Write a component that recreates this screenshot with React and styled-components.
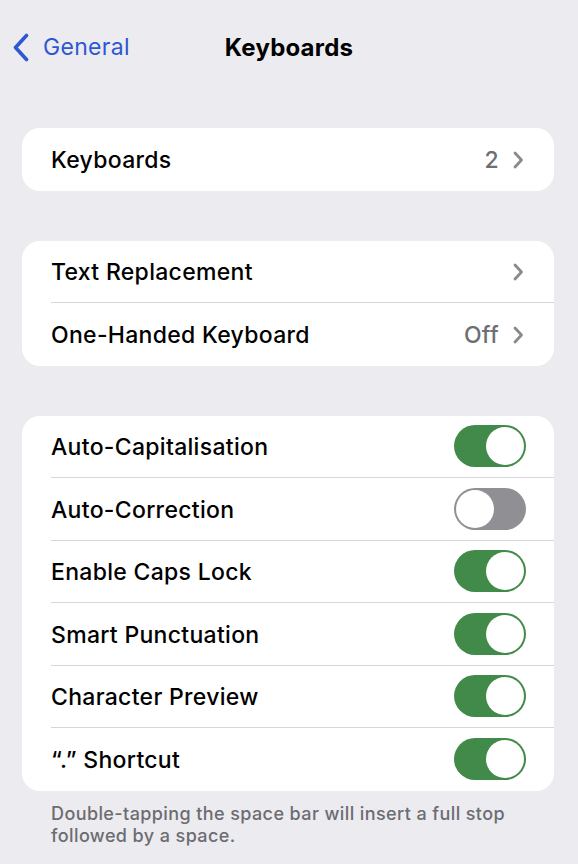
import React from "react";
import styled, { createGlobalStyle } from "styled-components";

const Global = createGlobalStyle`
  html, body { margin: 0; padding: 0; background: #ebebf0; }
  body { font-family: Inter, "Noto Sans", sans-serif; -webkit-font-smoothing: antialiased; }
`;

const Page = styled.div`
  width: 578px;
  min-height: 864px;
  background: #ebebf0;
  display: flex;
  flex-direction: column;
`;

const NavBar = styled.div`
  height: 94px;
  display: grid;
  grid-template-columns: 1fr auto 1fr;
  align-items: center;
  padding: 0 12px;
  box-sizing: border-box;
`;

const Back = styled.div`
  display: flex;
  align-items: center;
  gap: 14px;
  color: #2f57d1;
  font-size: 23px;
  font-weight: 400;
  letter-spacing: 0.3px;
`;

const Title = styled.div`
  font-size: 24px;
  font-weight: 700;
  color: #000;
  letter-spacing: 0.2px;
`;

const Content = styled.div`
  display: flex;
  flex-direction: column;
  padding: 34px 24px 0 22px;
  gap: 50px;
`;

const Card = styled.div`
  background: #fff;
  border-radius: 18px;
  overflow: hidden;
`;

const Row = styled.div`
  height: 62.5px;
  display: flex;
  align-items: center;
  padding-left: 29px;
`;

const RowInner = styled.div`
  flex: 1;
  height: 100%;
  display: flex;
  align-items: center;
  justify-content: space-between;
  padding-right: 28px;
  box-sizing: border-box;
  border-bottom: ${(p) => (p.$last ? "none" : "1px solid #d6d6da")};
`;

const Label = styled.span`
  font-size: 23px;
  font-weight: 500;
  color: #000;
  letter-spacing: 0.3px;
  padding-top: 2px;
`;

const Detail = styled.span`
  display: flex;
  align-items: center;
  gap: 14px;
  font-size: 23px;
  color: #6e6e73;
  font-weight: 500;
  letter-spacing: 0.3px;
  padding-right: 2px;
  padding-top: 2px;
`;

const Track = styled.div`
  width: 72px;
  height: 42px;
  border-radius: 21px;
  background: ${(p) => (p.$on ? "#428a49" : "#8f8f94")};
  display: flex;
  align-items: center;
  justify-content: ${(p) => (p.$on ? "flex-end" : "flex-start")};
  padding: 0 2px;
  box-sizing: border-box;
`;

const Knob = styled.div`
  width: 38px;
  height: 38px;
  border-radius: 50%;
  background: #fff;
`;

const Footer = styled.div`
  margin-top: -38px;
  padding: 0 10px 0 29px;
  font-size: 18px;
  line-height: 22.5px;
  color: #6c6c71;
  font-weight: 500;
  letter-spacing: 0.4px;
`;

const Chevron = () => (
  <svg width="11" height="18" viewBox="0 0 11 18">
    <path d="M2 2 L8.5 9 L2 16" fill="none" stroke="#8a8a8e" strokeWidth="2.8" strokeLinecap="round" strokeLinejoin="round" />
  </svg>
);

const BackChevron = () => (
  <svg width="17" height="29" viewBox="0 0 17 29">
    <path d="M14.5 2.5 L3.5 14.5 L14.5 26.5" fill="none" stroke="#2f57d1" strokeWidth="3.6" strokeLinecap="round" strokeLinejoin="round" />
  </svg>
);

const Toggle = ({ on }) => (
  <Track $on={on}>
    <Knob />
  </Track>
);

const NavRow = ({ label, value, last }) => (
  <Row>
    <RowInner $last={last}>
      <Label>{label}</Label>
      <Detail>
        {value && <span>{value}</span>}
        <Chevron />
      </Detail>
    </RowInner>
  </Row>
);

const ToggleRow = ({ label, on, last }) => (
  <Row>
    <RowInner $last={last}>
      <Label>{label}</Label>
      <Toggle on={on} />
    </RowInner>
  </Row>
);

const toggles = [
  ["Auto-Capitalisation", true],
  ["Auto-Correction", false],
  ["Enable Caps Lock", true],
  ["Smart Punctuation", true],
  ["Character Preview", true],
  ["“.” Shortcut", true],
];

export default function App() {
  return (
    <Page>
      <Global />
      <NavBar>
        <Back>
          <BackChevron />
          <span>General</span>
        </Back>
        <Title>Keyboards</Title>
        <div />
      </NavBar>
      <Content>
        <Card>
          <NavRow label="Keyboards" value="2" last />
        </Card>
        <Card>
          <NavRow label="Text Replacement" />
          <NavRow label="One-Handed Keyboard" value="Off" last />
        </Card>
        <Card>
          {toggles.map(([l, on], i) => (
            <ToggleRow key={l} label={l} on={on} last={i === toggles.length - 1} />
          ))}
        </Card>
        <Footer>
          Double-tapping the space bar will insert a full stop
          <br />
          followed by a space.
        </Footer>
      </Content>
    </Page>
  );
}
